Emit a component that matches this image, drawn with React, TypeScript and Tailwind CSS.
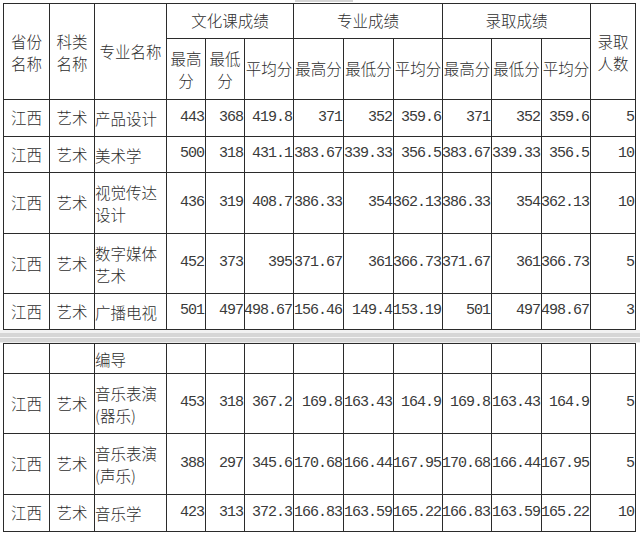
import React from "react";

const COLS =
  "grid-cols-[45px_44px_71px_38px_38px_48px_49px_49px_48px_48px_49px_48px_44px]";

const cjk = "font-['Noto_Sans_CJK_SC','Noto_Sans',sans-serif] font-extralight text-[15.5px] text-[#2e2e2e]";
const num = "font-['Liberation_Mono',monospace] text-[15px] tracking-[-1px] text-[#3a3a3a]";

type Row = {
  prov: string;
  kind: string;
  name: string[];
  nums: string[];
  count: string;
};

const top: Row[] = [
  { prov: "江西", kind: "艺术", name: ["产品设计"], nums: ["443", "368", "419.8", "371", "352", "359.6", "371", "352", "359.6"], count: "5" },
  { prov: "江西", kind: "艺术", name: ["美术学"], nums: ["500", "318", "431.1", "383.67", "339.33", "356.5", "383.67", "339.33", "356.5"], count: "10" },
  { prov: "江西", kind: "艺术", name: ["视觉传达", "设计"], nums: ["436", "319", "408.7", "386.33", "354", "362.13", "386.33", "354", "362.13"], count: "10" },
  { prov: "江西", kind: "艺术", name: ["数字媒体", "艺术"], nums: ["452", "373", "395", "371.67", "361", "366.73", "371.67", "361", "366.73"], count: "5" },
  { prov: "江西", kind: "艺术", name: ["广播电视"], nums: ["501", "497", "498.67", "156.46", "149.4", "153.19", "501", "497", "498.67"], count: "3" },
];

const bottom: Row[] = [
  { prov: "", kind: "", name: ["编导"], nums: ["", "", "", "", "", "", "", "", ""], count: "" },
  { prov: "江西", kind: "艺术", name: ["音乐表演", "(器乐)"], nums: ["453", "318", "367.2", "169.8", "163.43", "164.9", "169.8", "163.43", "164.9"], count: "5" },
  { prov: "江西", kind: "艺术", name: ["音乐表演", "(声乐)"], nums: ["388", "297", "345.6", "170.68", "166.44", "167.95", "170.68", "166.44", "167.95"], count: "5" },
  { prov: "江西", kind: "艺术", name: ["音乐学"], nums: ["423", "313", "372.3", "166.83", "163.59", "165.22", "166.83", "163.59", "165.22"], count: "10" },
];

function Cell({ children, className = "" }: { children?: React.ReactNode; className?: string }) {
  return <div className={`bg-white flex items-center overflow-visible whitespace-nowrap ${className}`}>{children}</div>;
}

function DataRow({ r }: { r: Row }) {
  return (
    <>
      <Cell className={`justify-center ${cjk}`}>{r.prov}</Cell>
      <Cell className={`justify-center ${cjk}`}>{r.kind}</Cell>
      <Cell className={`justify-start ${cjk} leading-[22px]`}>
        <div className="flex flex-col">
          {r.name.map((n, i) => (
            <span key={i}>{n}</span>
          ))}
        </div>
      </Cell>
      {r.nums.map((n, i) => (
        <Cell key={i} className={`justify-end pr-[1px] ${num}`}>
          {n}
        </Cell>
      ))}
      <Cell className={`justify-end pr-[1px] ${num}`}>{r.count}</Cell>
    </>
  );
}

function Two({ a, b }: { a: string; b: string }) {
  return (
    <div className="flex flex-col items-center leading-[22px]">
      <span>{a}</span>
      <span>{b}</span>
    </div>
  );
}

export default function App() {
  return (
    <div className="w-[640px] h-[533px] bg-white overflow-hidden">
      <div className="h-[3px]">
        <div className="ml-[295px] w-[58px] h-[2px] bg-[#d4d4d4]" />
      </div>
      <div
        className={`ml-[3px] w-[633px] grid ${COLS} grid-rows-[34px_60px_36px_35px_60px_59px_35px] gap-px p-px bg-[#2b2b2b]`}
      >
        <Cell className={`row-span-2 justify-center ${cjk}`}>
          <Two a="省份" b="名称" />
        </Cell>
        <Cell className={`row-span-2 justify-center ${cjk}`}>
          <Two a="科类" b="名称" />
        </Cell>
        <Cell className={`row-span-2 justify-center ${cjk}`}>专业名称</Cell>
        <Cell className={`col-span-3 justify-center ${cjk}`}>文化课成绩</Cell>
        <Cell className={`col-span-3 justify-center ${cjk}`}>专业成绩</Cell>
        <Cell className={`col-span-3 justify-center ${cjk}`}>录取成绩</Cell>
        <Cell className={`row-span-2 justify-center ${cjk}`}>
          <Two a="录取" b="人数" />
        </Cell>
        <Cell className={`justify-center ${cjk}`}>
          <Two a="最高" b="分" />
        </Cell>
        <Cell className={`justify-center ${cjk}`}>
          <Two a="最低" b="分" />
        </Cell>
        <Cell className={`justify-center ${cjk}`}>平均分</Cell>
        <Cell className={`justify-center ${cjk}`}>最高分</Cell>
        <Cell className={`justify-center ${cjk}`}>最低分</Cell>
        <Cell className={`justify-center ${cjk}`}>平均分</Cell>
        <Cell className={`justify-center ${cjk}`}>最高分</Cell>
        <Cell className={`justify-center ${cjk}`}>最低分</Cell>
        <Cell className={`justify-center ${cjk}`}>平均分</Cell>
        {top.map((r, i) => (
          <DataRow key={i} r={r} />
        ))}
      </div>
      <div className="h-[13px] flex flex-col">
        <div className="h-[3px] bg-[#f2f2f2]" />
        <div className="h-[4px] bg-[#d6d6d6]" />
        <div className="h-[1px] bg-[#f4f4f4]" />
        <div className="h-[4px] bg-[#d6d6d6]" />
        <div className="h-[1px] bg-[#eeeeee]" />
      </div>
      <div
        className={`ml-[3px] w-[633px] grid ${COLS} grid-rows-[29px_59px_60px_36px] gap-px p-px bg-[#2b2b2b]`}
      >
        {bottom.map((r, i) => (
          <DataRow key={i} r={r} />
        ))}
      </div>
    </div>
  );
}
